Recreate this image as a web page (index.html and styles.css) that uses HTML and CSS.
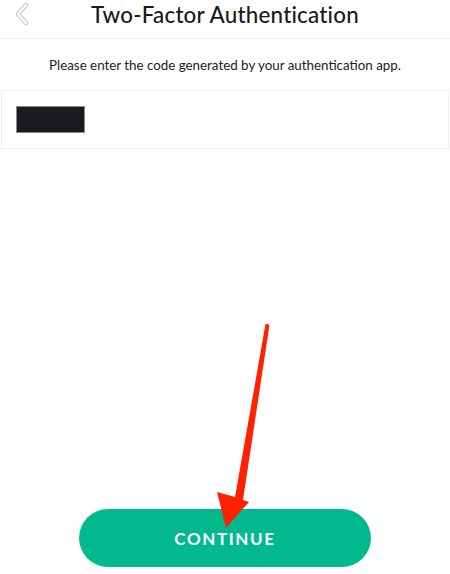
FILE: index.html
```html
<!DOCTYPE html>
<html lang="en">
<head>
<meta charset="utf-8">
<title>Two-Factor Authentication</title>
<link rel="stylesheet" href="styles.css">
</head>
<body>
<div class="screen">
  <header class="topbar">
    <button class="back" aria-label="Back">
      <svg width="18" height="24" viewBox="0 0 18 24">
        <path d="M13 3 L5 12 L13 21" fill="none" stroke="#c9c9c9" stroke-width="4.4" stroke-linecap="round" stroke-linejoin="round"/>
        <path d="M13 3 L5 12 L13 21" fill="none" stroke="#ffffff" stroke-width="2.2" stroke-linecap="round" stroke-linejoin="round"/>
      </svg>
    </button>
    <h1 class="title">Two-Factor Authentication</h1>
  </header>
  <p class="prompt">Please enter the code generated by your authentication app.</p>
  <div class="code-field">
    <span class="code-mask"></span>
  </div>
  <div class="actions">
    <button class="continue">CONTINUE</button>
  </div>
  <svg class="pointer" width="450" height="574" viewBox="0 0 450 574">
    <path d="M267.5 324 L269.5 325 L243 500 L249 502 L226 528 L217 492 L235 497 L265.5 324 Z" fill="#ff2200"/>
  </svg>
</div>
</body>
</html>
```

FILE: styles.css
```css
html, body {
  margin: 0;
  padding: 0;
  background: #ffffff;
}

.screen {
  position: relative;
  width: 450px;
  height: 574px;
  display: flex;
  flex-direction: column;
  font-family: "Lato", "Open Sans", sans-serif;
  color: #1c1c1c;
  overflow: hidden;
}

.topbar {
  height: 38px;
  border-bottom: 1px solid #ececec;
  display: flex;
  align-items: center;
  justify-content: center;
  position: relative;
  flex-shrink: 0;
}

.back {
  position: absolute;
  left: 13px;
  top: 2px;
  padding: 0;
  border: 0;
  background: none;
  display: flex;
}

.title {
  margin: 0 0 10px;
  font-size: 22.4px;
  font-weight: 500;
  letter-spacing: 0.2px;
  color: #1a1a1a;
}

.prompt {
  margin: 17px 0 0;
  text-align: center;
  font-size: 13.35px;
  line-height: 18px;
  color: #222222;
}

.code-field {
  margin: 16px 1px 0;
  height: 57px;
  border: 1px solid #efefef;
  display: flex;
  align-items: center;
  padding-left: 14px;
}

.code-mask {
  width: 69px;
  height: 27px;
  background: #1b1c1f;
  border: 1px solid #8a8a8c;
  box-sizing: border-box;
}

.actions {
  margin-top: auto;
  padding-bottom: 7px;
  display: flex;
  justify-content: center;
}

.continue {
  width: 292px;
  height: 58px;
  border: 0;
  border-radius: 29px;
  background: #02b98d;
  color: #ffffff;
  font-family: "Lato", "Open Sans", sans-serif;
  font-size: 17px;
  font-weight: 700;
  letter-spacing: 1.6px;
  padding: 0;
}

.pointer {
  position: absolute;
  left: 0;
  top: 0;
  pointer-events: none;
}
```
